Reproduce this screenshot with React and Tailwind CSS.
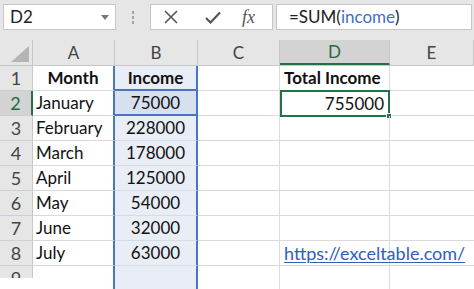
import React from "react";

const F = { fontFamily: "Lato, 'Open Sans', sans-serif" };

function HeaderCell({ w, children, sel, last }) {
  return (
    <div
      className={`flex items-center justify-center h-full text-[17px] border-r border-[#c8c8c8] ${
        sel ? "bg-[#d3d3d3] text-[#1e6b41] border-b-2 border-b-[#217346]" : "bg-[#e6e6e6] text-[#444]"
      } ${last ? "flex-1" : ""}`}
      style={last ? {} : { width: w }}
    >
      {children}
    </div>
  );
}

function RowHead({ n, sel, h = "h-full" }) {
  return (
    <div
      className={`w-[33px] shrink-0 ${h} flex items-center justify-center text-[18px] border-b border-[#cfcfcf] ${
        sel ? "bg-[#d3d3d3] text-[#1e6b41] border-r-2 border-r-[#217346]" : "bg-[#e6e6e6] text-[#444] border-r border-r-[#c8c8c8]"
      }`}
    >
      {n}
    </div>
  );
}

function Row({ n, a, b, d, bold, sel, b2, dSel, link }) {
  return (
    <div className="flex h-[25px] text-[17px] text-[#111]">
      <RowHead n={n} sel={sel} />
      <div
        className={`w-[82px] shrink-0 border-b border-[#dadada] border-r-2 border-r-[#4a74c4] flex items-center px-[3px] ${
          bold ? "justify-center font-bold" : ""
        }`}
      >
        {a}
      </div>
      <div
        className={`w-[83px] shrink-0 border-r-2 border-r-[#4a74c4] flex items-center justify-center ${
          b2 ? "bg-[#d7e0ef]" : "bg-[#e9edf6]"
        } ${n === 1 || n === 2 ? "border-b-2 border-b-[#4a74c4]" : "border-b border-b-[#d6dbe6]"} ${bold ? "font-bold" : ""}`}
      >
        {b}
      </div>
      <div className="w-[82px] shrink-0 border-b border-r border-[#dadada]" />
      <div
        className={`w-[110px] shrink-0 relative flex items-center px-[4px] ${
          dSel
            ? "border-2 border-[#217346] justify-end -my-px"
            : "border-b border-r border-[#dadada]"
        } ${bold ? "font-bold" : ""}`}
      >
        {link ? (
          <span className="whitespace-nowrap underline text-[18px] text-[#2c62b8] decoration-1 underline-offset-2">
            https://exceltable.com/
          </span>
        ) : (
          d
        )}
        {dSel && (
          <div className="absolute right-[-4px] bottom-[-4px] w-[6px] h-[6px] bg-[#217346] border border-white" />
        )}
      </div>
      <div className="flex-1 border-b border-[#dadada]" />
    </div>
  );
}

export default function App() {
  return (
    <div className="w-[474px] h-[289px] overflow-hidden bg-white" style={F}>
      {/* formula bar */}
      <div className="h-[40px] bg-[#e6e6e6] flex items-start pt-[4px] pl-[3px] pr-[2px]">
        <div className="w-[113px] h-[26px] bg-white border border-[#c6c6c6] flex items-center pl-[6px] pr-[6px] text-[17px] text-[#222]">
          <span className="flex-1">D2</span>
          <svg width="8" height="5" viewBox="0 0 8 5">
            <path d="M0 0 L8 0 L4 5 Z" fill="#777" />
          </svg>
        </div>
        <div className="w-[34px] h-[26px] flex flex-col items-center justify-center gap-[2px]">
          <div className="w-[2px] h-[3px] bg-[#a5a5a5]" />
          <div className="w-[2px] h-[3px] bg-[#a5a5a5]" />
          <div className="w-[2px] h-[3px] bg-[#a5a5a5]" />
        </div>
        <div className="w-[123px] h-[26px] bg-white border border-[#c6c6c6] flex items-center">
          <div className="w-[40px] flex justify-center">
            <svg width="14" height="14" viewBox="0 0 14 14">
              <path d="M1 1 L13 13 M13 1 L1 13" stroke="#555" strokeWidth="1.6" />
            </svg>
          </div>
          <div className="w-[40px] flex justify-center pl-[4px]">
            <svg width="16" height="13" viewBox="0 0 16 13">
              <path d="M1 7 L5.5 11.5 L15 1.5" stroke="#555" strokeWidth="2.2" fill="none" />
            </svg>
          </div>
          <div
            className="flex-1 flex justify-center pr-[6px] text-[18px] italic text-[#555]"
            style={{ fontFamily: "'Liberation Serif', serif" }}
          >
            fx
          </div>
        </div>
        <div className="ml-[3px] flex-1 h-[26px] bg-white border border-[#c6c6c6] flex items-center pl-[12px] text-[17px] text-[#222]">
          =SUM(<span className="text-[#3f6fc6]">income</span>)
        </div>
      </div>
      {/* column headers */}
      <div className="flex h-[26px] border-b border-[#c8c8c8]">
        <div className="w-[33px] shrink-0 h-full bg-[#e6e6e6] border-r border-[#c8c8c8] flex items-end justify-end pr-[3px] pb-[3px]">
          <svg width="18" height="16" viewBox="0 0 18 16">
            <path d="M18 0 L18 16 L0 16 Z" fill="#b4b4b4" />
          </svg>
        </div>
        <HeaderCell w={82}>A</HeaderCell>
        <HeaderCell w={83}>B</HeaderCell>
        <HeaderCell w={82}>C</HeaderCell>
        <HeaderCell w={110} sel>D</HeaderCell>
        <HeaderCell last>E</HeaderCell>
      </div>
      <Row n={1} a="Month" b="Income" d="Total Income" bold />
      <Row n={2} a="January" b="75000" d="755000" sel b2 dSel />
      <Row n={3} a="February" b="228000" />
      <Row n={4} a="March" b="178000" />
      <Row n={5} a="April" b="125000" />
      <Row n={6} a="May" b="54000" />
      <Row n={7} a="June" b="32000" />
      <Row n={8} a="July" b="63000" link />
      {/* row 9 (partly cut) */}
      <div className="flex h-[25px]">
        <div className="w-[115px] shrink-0 flex flex-col">
          <div className="h-[12px] flex overflow-hidden">
            <div className="w-[33px] shrink-0 bg-[#e6e6e6] border-r border-[#c8c8c8] flex justify-center text-[18px] text-[#444] leading-[25px]">
              9
            </div>
            <div className="flex-1 border-r-2 border-r-[#4a74c4]" />
          </div>
          <div className="flex-1 bg-white" />
        </div>
        <div className="shrink-0 bg-[#e9edf6] border-x-2 border-[#4a74c4] -ml-[2px] w-[85px]" />
        <div className="w-[82px] shrink-0 border-r border-[#dadada]" />
        <div className="w-[110px] shrink-0 border-r border-[#dadada]" />
        <div className="flex-1" />
      </div>
    </div>
  );
}
